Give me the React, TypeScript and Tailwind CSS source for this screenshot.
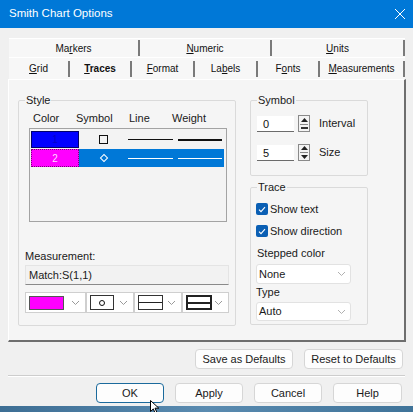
import React from 'react';

const font = { fontFamily: '"Liberation Sans", Arial, sans-serif' };

// one tab header with its access-key letter underlined
const Tab: React.FC<{ label: string; u: number; w: string; selected?: boolean; h: string }> = ({ label, u, w, selected, h }) => (
  <div className={`${w} ${h} flex items-center bg-[#f7f7f7] border-t border-white`}>
    <span className={`flex-1 text-center text-[10px] text-[#111] ${selected ? 'font-bold text-[10.5px]' : ''}`}>
      {label.slice(0, u)}
      <span className="underline underline-offset-1">{label[u]}</span>
      {label.slice(u + 1)}
    </span>
    <span className="w-[2px] h-[16px] bg-[#7a7a7a]" />
  </div>
);

const GroupBox: React.FC<{ title: string; className: string; children: React.ReactNode }> = ({ title, className, children }) => (
  <fieldset className={`border border-[#dadada] rounded-[2px] ${className}`}>
    <legend className="ml-[6px] px-[1px] text-[11px] leading-[13px] text-[#1a1a1a]">{title}</legend>
    {children}
  </fieldset>
);

const Chevron: React.FC<{ color?: string }> = ({ color = '#9a9a9a' }) => (
  <svg width="9" height="6" viewBox="0 0 9 6" fill="none">
    <path d="M1 1l3.5 3.5L8 1" stroke={color} strokeWidth="1" />
  </svg>
);

const Spinner: React.FC<{ downDisabled?: boolean }> = ({ downDisabled }) => (
  <div className="w-[12px] h-[17px] border border-[#8a8a8a] bg-[#f4f4f4] flex flex-col items-center justify-center gap-[2px]">
    <svg width="7" height="4" viewBox="0 0 7 4"><path d="M0 4L3.5 0L7 4z" fill="#222" /></svg>
    <div className="w-[8px] h-[1px] bg-[#888]" />
    {downDisabled ? (
      <div className="w-[7px] h-[1.5px] bg-[#333]" />
    ) : (
      <svg width="7" height="4" viewBox="0 0 7 4"><path d="M0 0L3.5 4L7 0z" fill="#222" /></svg>
    )}
  </div>
);

const NumberField: React.FC<{ value: string; label: string; downDisabled?: boolean; className?: string }> = ({ value, label, downDisabled, className }) => (
  <div className={`flex items-center h-[17px] ml-[6px] ${className ?? ''}`}>
    <div className="w-[37px] h-[16px] bg-white border-b border-[#6b6b6b] text-[11px] leading-[16px] pl-[6px] text-[#111]">{value}</div>
    <div className="ml-[4px]"><Spinner downDisabled={downDisabled} /></div>
    <span className="ml-[9px] text-[11px] text-[#1a1a1a]">{label}</span>
  </div>
);

const Check: React.FC<{ label: string; className?: string }> = ({ label, className }) => (
  <div className={`flex items-center h-[14px] ml-[5px] ${className ?? ''}`}>
    <div className="w-[12px] h-[12px] rounded-[2px] bg-[#0a5fb4] flex items-center justify-center">
      <svg width="8" height="7" viewBox="0 0 8 7" fill="none"><path d="M1 3.6l2 2L7 1.2" stroke="white" strokeWidth="1.1" /></svg>
    </div>
    <span className="ml-[2px] text-[11px] text-[#1a1a1a]">{label}</span>
  </div>
);

const Select: React.FC<{ value: string; className?: string }> = ({ value, className }) => (
  <div className={`ml-[5px] w-[95px] flex items-center justify-between bg-white border border-[#e2e2e2] rounded-[3px] pl-[2px] pr-[4px] ${className ?? ''}`}>
    <span className="text-[11px] text-[#1a1a1a]">{value}</span>
    <Chevron color="#b0b0b0" />
  </div>
);

const Button: React.FC<{ label: string; w: string; primary?: boolean }> = ({ label, w, primary }) => (
  <div className={`${w} h-[20px] flex items-center justify-center rounded-[4px] bg-[#fdfdfd] text-[11px] text-[#1a1a1a] ${primary ? 'border-[1.5px] border-[#1b6a9c]' : 'border border-[#d6d6d6]'}`}>
    {label}
  </div>
);

const Drop: React.FC<{ w: string; children: React.ReactNode }> = ({ w, children }) => (
  <div className={`${w} h-[21px] bg-white border border-[#cfcfcf] flex items-center justify-between pl-[3px] pr-[5px]`}>
    {children}
    <Chevron />
  </div>
);

export default function App() {
  return (
    <div style={font} className="relative w-[413px] h-[412px] overflow-hidden bg-[#f0f0f0] flex flex-col">
      {/* title bar */}
      <div className="h-[28px] bg-[#0078d7] flex items-center justify-between pl-[9px] pr-[7px] shrink-0">
        <span className="text-[11.5px] text-white">Smith Chart Options</span>
        <svg width="12" height="12" viewBox="0 0 12 12"><path d="M1 1l10 10M11 1L1 11" stroke="white" strokeWidth="1" /></svg>
      </div>

      {/* tab headers */}
      <div className="mt-[10px] ml-[9px] flex">
        <Tab label="Markers" u={2} w="w-[131px]" h="h-[19px]" />
        <Tab label="Numeric" u={0} w="w-[132px]" h="h-[19px]" />
        <Tab label="Units" u={0} w="w-[133px]" h="h-[19px]" />
      </div>
      <div className="ml-[9px] flex">
        <Tab label="Grid" u={0} w="w-[61px]" h="h-[22px]" />
        <Tab label="Traces" u={0} w="w-[62px]" h="h-[22px]" selected />
        <Tab label="Format" u={0} w="w-[63px]" h="h-[22px]" />
        <Tab label="Labels" u={2} w="w-[63px]" h="h-[22px]" />
        <Tab label="Fonts" u={1} w="w-[62px]" h="h-[22px]" />
        <Tab label="Measurements" u={0} w="w-[85px]" h="h-[22px]" />
      </div>

      {/* tab page */}
      <div className="ml-[8px] w-[398px] h-[263px] bg-[#f5f5f5] border-l border-t border-white border-r-2 border-b-2 border-r-[#6e6e6e] border-b-[#6e6e6e] flex items-start pt-[14px]">
        <GroupBox title="Style" className="ml-[9px] w-[218px] h-[232px]">
          <div className="mt-[5px] ml-[14px] flex h-[13px] leading-[13px] text-[11px] text-[#1a1a1a]">
            <span className="w-[43px]">Color</span>
            <span className="w-[53px]">Symbol</span>
            <span className="w-[43px]">Line</span>
            <span>Weight</span>
          </div>
          <div className="mt-[3px] ml-[10px] w-[198px] h-[94px] border border-[#a3a3a3] bg-[#f3f3f3] pt-[2px] pl-[1px]">
            <div className="flex h-[17px]">
              <div className="w-[48px] bg-[#0000ff] border border-[#00006a] flex items-center justify-center text-[10px] text-[#0000c8]">1</div>
              <div className="w-[49px] flex items-center justify-center">
                <div className="w-[9px] h-[9px] border-[1.5px] border-[#111]" />
              </div>
              <div className="w-[45px] flex items-center"><div className="w-[45px] h-[1px] bg-[#111]" /></div>
              <div className="ml-[5px] w-[44px] flex items-center"><div className="w-[44px] h-[2px] bg-[#111]" /></div>
            </div>
            <div className="flex h-[18px] mt-[1px]">
              <div className="w-[48px] bg-[#ff00ff] border border-dotted border-[#7a007a] flex items-center justify-center text-[10px] text-[#ffd6ff]">2</div>
              <div className="w-[145px] bg-[#0078d7] flex items-center">
                <div className="w-[49px] flex items-center justify-center">
                  <div className="w-[6px] h-[6px] rotate-45 border border-white" />
                </div>
                <div className="w-[45px] h-[1px] bg-white" />
                <div className="ml-[5px] w-[44px] h-[1px] bg-white" />
              </div>
            </div>
          </div>
          <div className="mt-[28px] ml-[6px] h-[13px] leading-[13px] text-[11px] text-[#1a1a1a]">Measurement:</div>
          <div className="mt-[2px] ml-[6px] w-[204px] h-[20px] bg-[#f2f2f2] border border-[#e4e4e4] border-b-[#8a8a8a] flex items-center pl-[3px] text-[11px] text-[#1a1a1a]">
            Match:S(1,1)
          </div>
          <div className="mt-[7px] ml-[6px] flex">
            <Drop w="w-[61px]"><div className="w-[35px] h-[14px] bg-[#ff00ff] border border-[#555]" /></Drop>
            <Drop w="w-[48px]">
              <div className="w-[24px] h-[15px] border border-[#333] flex items-center justify-center">
                <div className="w-[6px] h-[6px] rounded-full border border-[#111]" />
              </div>
            </Drop>
            <Drop w="w-[48px]">
              <div className="w-[25px] h-[15px] border border-[#333] flex items-center"><div className="w-full h-[1px] bg-[#222]" /></div>
            </Drop>
            <Drop w="w-[47px]">
              <div className="w-[26px] h-[15px] border-2 border-[#222] flex items-center"><div className="w-full h-[2px] bg-[#222]" /></div>
            </Drop>
          </div>
        </GroupBox>

        <div className="ml-[14px] flex flex-col">
          <GroupBox title="Symbol" className="w-[118px] h-[82px]">
            <NumberField value="0" label="Interval" downDisabled className="mt-[8px]" />
            <NumberField value="5" label="Size" className="mt-[12px]" />
          </GroupBox>
          <GroupBox title="Trace" className="mt-[5px] w-[118px] h-[144px]">
            <Check label="Show text" className="mt-[8px]" />
            <Check label="Show direction" className="mt-[8px]" />
            <div className="mt-[9px] ml-[6px] h-[13px] leading-[13px] text-[11px] text-[#1a1a1a]">Stepped color</div>
            <Select value="None" className="mt-[4px] h-[20px]" />
            <div className="mt-[2px] ml-[5px] h-[13px] leading-[13px] text-[11px] text-[#1a1a1a]">Type</div>
            <Select value="Auto" className="mt-[3px] h-[19px]" />
          </GroupBox>
        </div>
      </div>

      {/* defaults buttons */}
      <div className="mt-[7px] pr-[10px] flex justify-end gap-[11px]">
        <Button label="Save as Defaults" w="w-[98px]" />
        <Button label="Reset to Defaults" w="w-[99px]" />
      </div>

      <div className="mt-[6px] ml-[8px] w-[397px] h-[1px] bg-[#cdcdcd] border-b border-white box-content" />

      {/* dialog buttons */}
      <div className="mt-[6px] pr-[11px] flex justify-end gap-[11px]">
        <Button label="OK" w="w-[68px]" primary />
        <Button label="Apply" w="w-[68px]" />
        <Button label="Cancel" w="w-[68px]" />
        <Button label="Help" w="w-[69px]" />
      </div>

      {/* desktop showing beneath the window edge */}
      <div className="mt-auto h-[6px] bg-gradient-to-r from-[#3d6e94] via-[#5a8bb0] to-[#3f7399]" />

      {/* mouse pointer */}
      <svg className="absolute left-[150px] top-[400px]" width="10" height="14" viewBox="0 0 10 14">
        <path d="M0.5 0.5v11l2.8-2.6 1.9 4.4 1.7-.8-1.9-4.3h3.8z" fill="white" stroke="black" strokeWidth="1" />
      </svg>
    </div>
  );
}
